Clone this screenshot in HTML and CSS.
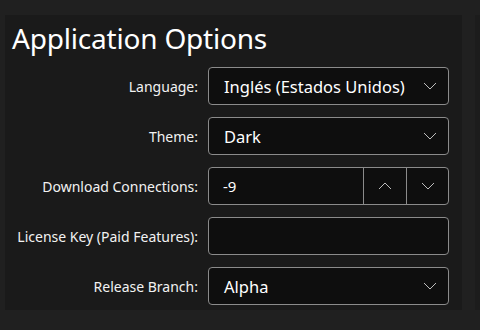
FILE: index.html
```html
<!DOCTYPE html>
<html lang="en">
<head>
  <meta charset="UTF-8" />
  <title>Application Options</title>
  <link rel="stylesheet" href="styles.css">
</head>
<body>
  <div class="window">
    <section class="panel">
      <h1>Application Options</h1>
      <div class="form">
        <label>Language:</label>
        <div class="field combo">
          <span>Inglés (Estados Unidos)</span>
          <svg class="chev" viewBox="0 0 14 8"><path d="M1 1l6 6 6-6" /></svg>
        </div>

        <label>Theme:</label>
        <div class="field combo">
          <span>Dark</span>
          <svg class="chev" viewBox="0 0 14 8"><path d="M1 1l6 6 6-6" /></svg>
        </div>

        <label>Download Connections:</label>
        <div class="field spin">
          <span class="value">-9</span>
          <button class="step"><svg class="chev" viewBox="0 0 14 8"><path d="M1 7l6-6 6 6" /></svg></button>
          <button class="step"><svg class="chev" viewBox="0 0 14 8"><path d="M1 1l6 6 6-6" /></svg></button>
        </div>

        <label>License Key (Paid Features):</label>
        <div class="field text"></div>

        <label>Release Branch:</label>
        <div class="field combo">
          <span>Alpha</span>
          <svg class="chev" viewBox="0 0 14 8"><path d="M1 1l6 6 6-6" /></svg>
        </div>
      </div>
    </section>
    <div class="side"></div>
  </div>
</body>
</html>
```

FILE: styles.css
```css
body {
  margin: 0;
  background: #202020;
  font-family: 'Noto Sans', 'Open Sans', sans-serif;
  color: #ffffff;
}
.window {
  display: flex;
  padding: 15px 0 20px 5px;
  height: 295px;
}
.panel {
  width: 457px;
  background: #1a1a1a;
  box-sizing: border-box;
  padding: 0 13px 0 7px;
}
.side {
  margin-left: 13px;
  width: 5px;
  background: #1c1c1c;
}
h1 {
  margin: 0;
  font-weight: normal;
  font-size: 28px;
  line-height: 46px;
  letter-spacing: -0.2px;
}
.form {
  margin-top: 6px;
  display: grid;
  grid-template-columns: 186px 241px;
  column-gap: 10px;
  row-gap: 12px;
}
label {
  font-size: 14px;
  text-align: right;
  align-self: center;
  color: #f2f2f2;
}
.field {
  height: 38px;
  box-sizing: border-box;
  border: 1px solid #8b8b8b;
  border-radius: 4px;
  background: #0e0e0e;
  display: flex;
  align-items: center;
  font-size: 16.5px;
}
.combo {
  padding: 0 11px 0 15px;
  justify-content: space-between;
}
.chev {
  width: 14px;
  height: 8px;
  fill: none;
  stroke: #bdbdbd;
  stroke-width: 1;
}
.spin .value {
  flex: 1;
  padding-left: 14px;
  font-size: 15px;
}
.step {
  width: 43px;
  height: 100%;
  border: none;
  border-left: 1px solid #8b8b8b;
  background: transparent;
  padding: 0;
  display: flex;
  align-items: center;
  justify-content: center;
}
.step:last-child {
  width: 42px;
}
```
